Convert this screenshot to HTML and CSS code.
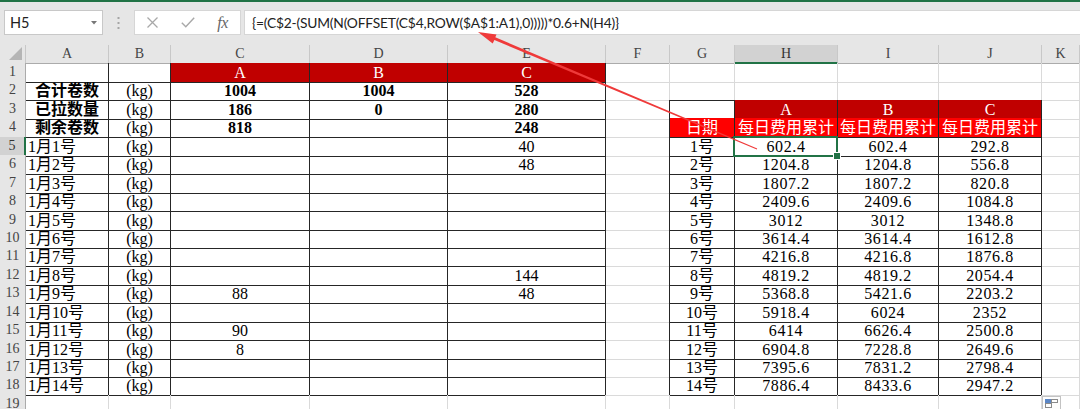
FILE: index.html
```html
<!DOCTYPE html>
<html lang="zh-CN">
<head>
<meta charset="utf-8">
<title>费用累计</title>
<link rel="stylesheet" href="styles.css">
</head>
<body>
<div class="app">
  <div class="topbar">
    <div class="namebox">
      <span>H5</span>
      <svg class="caret" width="6" height="4" viewBox="0 0 6 4"><path d="M0 0H6L3 3.5Z" fill="#777"/></svg>
    </div>
    <div class="grip">
      <svg width="3" height="12" viewBox="0 0 3 12"><rect x="0.5" y="0" width="2" height="2" fill="#a5a5a5"/><rect x="0.5" y="5" width="2" height="2" fill="#a5a5a5"/><rect x="0.5" y="10" width="2" height="2" fill="#a5a5a5"/></svg>
    </div>
    <div class="fbtns">
      <span class="fb"><svg width="11" height="11" viewBox="0 0 11 11"><path d="M0.5 0.5L10.5 10.5M10.5 0.5L0.5 10.5" stroke="#a8a8a8" stroke-width="1.3" fill="none"/></svg></span>
      <span class="fb"><svg width="14" height="11" viewBox="0 0 14 11"><path d="M0.8 5.8L4.8 9.8L13.2 0.8" stroke="#a8a8a8" stroke-width="1.4" fill="none"/></svg></span>
      <span class="fb fx">fx</span>
    </div>
    <div class="fbox">{=(C$2-(SUM(N(OFFSET(C$4,ROW($A$1:A1),0)))))*0.6+N(H4)}</div>
  </div>

  <div class="sheet">
    <div class="row hd">
      <div class="corner"><svg width="14" height="14" viewBox="0 0 14 14"><path d="M13 0V13H0Z" fill="#b5b5b5"/></svg></div>
      <div class="ch">A</div><div class="ch">B</div><div class="ch">C</div><div class="ch">D</div><div class="ch">E</div><div class="ch">F</div><div class="ch">G</div><div class="ch sel">H</div><div class="ch">I</div><div class="ch">J</div><div class="ch">K</div>
    </div>

    <div class="row">
      <div class="rh">1</div>
      <div class="t"></div><div class="t"></div><div class="t rd">A</div><div class="t rd">B</div><div class="t rd">C</div>
      <div></div><div></div><div></div><div></div><div></div><div></div>
    </div>
    <div class="row">
      <div class="rh">2</div>
      <div class="t b">合计卷数</div><div class="t">(kg)</div><div class="t b">1004</div><div class="t b">1004</div><div class="t b">528</div>
      <div></div><div class="bt"></div><div class="bt"></div><div class="bt"></div><div class="bt"></div><div></div>
    </div>
    <div class="row">
      <div class="rh">3</div>
      <div class="t b">已拉数量</div><div class="t">(kg)</div><div class="t b">186</div><div class="t b">0</div><div class="t b">280</div>
      <div class="bl"></div><div class="t"></div><div class="t rd">A</div><div class="t rd">B</div><div class="t rd">C</div><div></div>
    </div>
    <div class="row">
      <div class="rh">4</div>
      <div class="t b">剩余卷数</div><div class="t">(kg)</div><div class="t b">818</div><div class="t"></div><div class="t b">248</div>
      <div class="bl"></div><div class="t rb">日期</div><div class="t rb">每日费用累计</div><div class="t rb">每日费用累计</div><div class="t rb">每日费用累计</div><div></div>
    </div>
    <div class="row">
      <div class="rh sel">5</div>
      <div class="t l">1月1号</div><div class="t">(kg)</div><div class="t"></div><div class="t"></div><div class="t">40</div>
      <div class="bl"></div><div class="t">1号</div><div class="t n cur">602.4</div><div class="t n">602.4</div><div class="t n">292.8</div><div></div>
    </div>
    <div class="row">
      <div class="rh">6</div>
      <div class="t l">1月2号</div><div class="t">(kg)</div><div class="t"></div><div class="t"></div><div class="t">48</div>
      <div class="bl"></div><div class="t">2号</div><div class="t n">1204.8</div><div class="t n">1204.8</div><div class="t n">556.8</div><div></div>
    </div>
    <div class="row">
      <div class="rh">7</div>
      <div class="t l">1月3号</div><div class="t">(kg)</div><div class="t"></div><div class="t"></div><div class="t"></div>
      <div class="bl"></div><div class="t">3号</div><div class="t n">1807.2</div><div class="t n">1807.2</div><div class="t n">820.8</div><div></div>
    </div>
    <div class="row">
      <div class="rh">8</div>
      <div class="t l">1月4号</div><div class="t">(kg)</div><div class="t"></div><div class="t"></div><div class="t"></div>
      <div class="bl"></div><div class="t">4号</div><div class="t n">2409.6</div><div class="t n">2409.6</div><div class="t n">1084.8</div><div></div>
    </div>
    <div class="row">
      <div class="rh">9</div>
      <div class="t l">1月5号</div><div class="t">(kg)</div><div class="t"></div><div class="t"></div><div class="t"></div>
      <div class="bl"></div><div class="t">5号</div><div class="t n">3012</div><div class="t n">3012</div><div class="t n">1348.8</div><div></div>
    </div>
    <div class="row">
      <div class="rh">10</div>
      <div class="t l">1月6号</div><div class="t">(kg)</div><div class="t"></div><div class="t"></div><div class="t"></div>
      <div class="bl"></div><div class="t">6号</div><div class="t n">3614.4</div><div class="t n">3614.4</div><div class="t n">1612.8</div><div></div>
    </div>
    <div class="row">
      <div class="rh">11</div>
      <div class="t l">1月7号</div><div class="t">(kg)</div><div class="t"></div><div class="t"></div><div class="t"></div>
      <div class="bl"></div><div class="t">7号</div><div class="t n">4216.8</div><div class="t n">4216.8</div><div class="t n">1876.8</div><div></div>
    </div>
    <div class="row">
      <div class="rh">12</div>
      <div class="t l">1月8号</div><div class="t">(kg)</div><div class="t"></div><div class="t"></div><div class="t">144</div>
      <div class="bl"></div><div class="t">8号</div><div class="t n">4819.2</div><div class="t n">4819.2</div><div class="t n">2054.4</div><div></div>
    </div>
    <div class="row">
      <div class="rh">13</div>
      <div class="t l">1月9号</div><div class="t">(kg)</div><div class="t">88</div><div class="t"></div><div class="t">48</div>
      <div class="bl"></div><div class="t">9号</div><div class="t n">5368.8</div><div class="t n">5421.6</div><div class="t n">2203.2</div><div></div>
    </div>
    <div class="row">
      <div class="rh">14</div>
      <div class="t l">1月10号</div><div class="t">(kg)</div><div class="t"></div><div class="t"></div><div class="t"></div>
      <div class="bl"></div><div class="t">10号</div><div class="t n">5918.4</div><div class="t n">6024</div><div class="t n">2352</div><div></div>
    </div>
    <div class="row">
      <div class="rh">15</div>
      <div class="t l">1月11号</div><div class="t">(kg)</div><div class="t">90</div><div class="t"></div><div class="t"></div>
      <div class="bl"></div><div class="t">11号</div><div class="t n">6414</div><div class="t n">6626.4</div><div class="t n">2500.8</div><div></div>
    </div>
    <div class="row">
      <div class="rh">16</div>
      <div class="t l">1月12号</div><div class="t">(kg)</div><div class="t">8</div><div class="t"></div><div class="t"></div>
      <div class="bl"></div><div class="t">12号</div><div class="t n">6904.8</div><div class="t n">7228.8</div><div class="t n">2649.6</div><div></div>
    </div>
    <div class="row">
      <div class="rh">17</div>
      <div class="t l">1月13号</div><div class="t">(kg)</div><div class="t"></div><div class="t"></div><div class="t"></div>
      <div class="bl"></div><div class="t">13号</div><div class="t n">7395.6</div><div class="t n">7831.2</div><div class="t n">2798.4</div><div></div>
    </div>
    <div class="row">
      <div class="rh">18</div>
      <div class="t l">1月14号</div><div class="t">(kg)</div><div class="t"></div><div class="t"></div><div class="t"></div>
      <div class="bl"></div><div class="t">14号</div><div class="t n">7886.4</div><div class="t n">8433.6</div><div class="t n">2947.2</div><div></div>
    </div>
    <div class="row">
      <div class="rh">19</div>
      <div></div><div></div><div></div><div></div><div></div><div></div><div></div><div></div><div></div><div></div><div></div>
    </div>
  </div>

  <!-- callout arrow from the active cell up to the formula text -->
  <svg class="arrow" width="1080" height="409" viewBox="0 0 1080 409">
    <polygon points="478,32 492.7,43.6 494.4,40.1 756.8,149.5 757.2,148.5 495.3,37.3 496.5,34.4" fill="#ef3a3a"/>
  </svg>

  <!-- quick analysis button -->
  <svg class="qa" width="20" height="14" viewBox="0 0 20 14">
    <rect x="0.5" y="0.5" width="18" height="14" fill="#fdfdfd" stroke="#c3c3c3"/>
    <rect x="3" y="3" width="6" height="4" fill="#5b86c5"/>
    <rect x="9.5" y="3.5" width="6" height="3" fill="none" stroke="#8a8a8a"/>
    <rect x="3.5" y="7.5" width="6" height="4" fill="none" stroke="#8a8a8a"/>
  </svg>
</div>
</body>
</html>
```

FILE: styles.css
```css
* {
  box-sizing: border-box;
  margin: 0;
  padding: 0;
}

html,
body {
  width: 1080px;
  height: 409px;
  overflow: hidden;
  background: #ffffff;
}

body {
  font-family: "Liberation Serif", "Noto Sans CJK SC", serif;
  color: #000;
}

.app {
  position: relative;
  width: 1080px;
  height: 409px;
  overflow: hidden;
}

/* ---------- formula bar ---------- */
.topbar {
  height: 45px;
  background: #e6e6e6;
  border-top: 2px solid #217346;
  padding-top: 8px;
  display: flex;
  align-items: flex-start;
}

.namebox {
  margin-left: 4px;
  width: 99px;
  height: 25px;
  background: #fff;
  border: 1px solid #c8c8c8;
  display: flex;
  align-items: center;
  justify-content: space-between;
  padding: 0 5px 0 5px;
  font: 14.5px "Lato", "Liberation Sans", sans-serif;
  color: #222;
}

.grip {
  width: 31px;
  height: 25px;
  display: flex;
  align-items: center;
  justify-content: center;
}

.fbtns {
  width: 107px;
  height: 25px;
  background: #fff;
  border: 1px solid #d6d6d6;
  display: flex;
  align-items: center;
}

.fb {
  width: 36px;
  display: flex;
  align-items: center;
  justify-content: center;
}

.fx {
  font: italic 16px "Liberation Serif", serif;
  color: #666;
  letter-spacing: -0.5px;
}

.fbox {
  margin-left: 3px;
  flex: 1;
  height: 25px;
  background: #fff;
  border: 1px solid #d6d6d6;
  border-right: none;
  padding-left: 7px;
  font: 13.8px "Lato", "Liberation Sans", sans-serif;
  letter-spacing: -0.2px;
  line-height: 23px;
  color: #222;
  white-space: nowrap;
  overflow: hidden;
}

/* ---------- worksheet grid ---------- */
.row {
  display: grid;
  grid-template-columns: 26px 83px 62px 139px 138px 158px 64px 65px 103px 101px 103px 1fr;
  height: 18.44px;
}

.row > div {
  border-right: 1px solid #dadada;
  border-bottom: 1px solid #dadada;
  font-size: 16px;
  line-height: 18px;
  padding-top: 1px;
  text-align: center;
  white-space: nowrap;
}

.row.hd {
  height: 18px;
}

.row.hd > div {
  background: #e6e6e6;
  border-right: 1px solid #c8c8c8;
  border-bottom: 1px solid #ababab;
  font-size: 14px;
  line-height: 17px;
  padding-top: 0;
  color: #444;
}

.row.hd > .corner {
  display: flex;
  align-items: flex-end;
  justify-content: flex-end;
  padding: 0 2px 2px 0;
}

.row.hd > .ch.sel {
  background: #d2d2d2;
  border-bottom: 2px solid #217346;
  color: #333;
}

.row > .rh {
  background: #e6e6e6;
  border-right: 1px solid #ababab;
  border-bottom: 1px solid #c8c8c8;
  font-size: 14px;
  line-height: 18px;
  padding-top: 0;
  color: #444;
}

.row > .rh.sel {
  background: #d2d2d2;
  border-right: 2px solid #217346;
  color: #333;
}

/* bordered table cells */
.row > .t {
  border-right-color: #262626;
  border-bottom-color: #262626;
}

.row > .bl {
  border-right-color: #262626;
}

.row > .bt {
  border-bottom-color: #262626;
}

.row > .l {
  text-align: left;
  padding-left: 2px;
}

.row > .b {
  font-weight: bold;
}

/* running totals: the sheet font sets figures a little looser */
.row > .n {
  letter-spacing: 0.6px;
}

.row > .rd {
  background: #c00000;
  color: #fff;
}

.row > .rb {
  background: #ff0000;
  color: #fff;
}

/* active cell frame with fill handle */
.row > .cur {
  position: relative;
}

.row > .cur::after {
  content: "";
  position: absolute;
  left: -2px;
  top: -1px;
  right: -1px;
  bottom: -1px;
  border: 2px solid #217346;
}

.row > .cur::before {
  content: "";
  position: absolute;
  right: -4px;
  bottom: -4px;
  width: 6px;
  height: 6px;
  background: #217346;
  border: 1px solid #fff;
  z-index: 2;
}

/* ---------- overlays ---------- */
.arrow {
  position: absolute;
  left: 0;
  top: 0;
  pointer-events: none;
}

.qa {
  position: absolute;
  left: 1042px;
  top: 396px;
}
```
